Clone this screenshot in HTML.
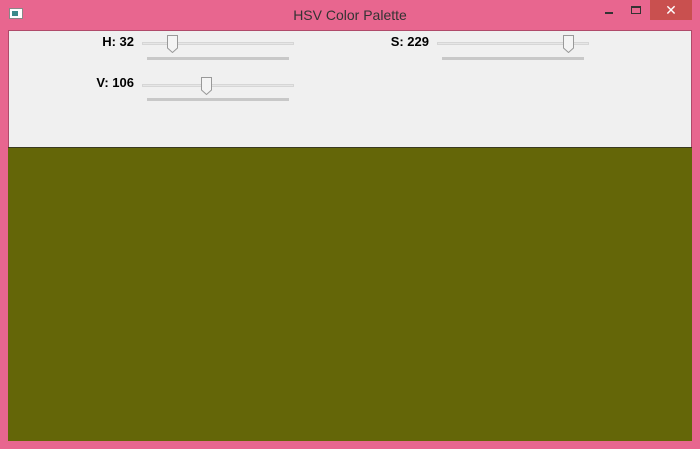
<!DOCTYPE html>
<html><head><style>
body{margin:0;width:700px;height:449px;background:#e8668f;position:relative;overflow:hidden;font-family:"Liberation Sans",sans-serif}
.a{position:absolute}
.title{left:0;width:700px;top:7px;text-align:center;font-size:14px;color:#333}
.client{left:8px;top:30px;width:684px;height:411px;background:#f0f0f0;border:1px solid #b04a6a;box-sizing:border-box}
.olive{left:8px;top:147px;width:684px;height:294px;background:#646608;border-top:1px solid #3a3a20;box-sizing:border-box}
.lbl{font-size:13px;font-weight:bold;color:#000;text-align:right;width:60px}
.track{height:3px;background:#e6e6e6;border:1px solid #d6d6d6;box-sizing:border-box}
.bar{height:3px;background:#c8c8c8}
.thumb{width:11px;height:18px}
</style></head><body>
<div class="a title">HSV Color Palette</div>
<div class="a" style="left:9px;top:8px;width:14px;height:11px;background:#fff;border:1px solid #888;box-sizing:border-box"><div style="margin:2px;width:6px;height:5px;background:#3a8a8a"></div></div>
<div class="a" style="left:605px;top:12px;width:8px;height:2px;background:#333"></div>
<div class="a" style="left:631px;top:6px;width:10px;height:8px;border:1px solid #333;border-top-width:2px;box-sizing:border-box"></div>
<div class="a" style="left:650px;top:0;width:42px;height:20px;background:#c9504f;color:#fff;text-align:center;font-size:14px;line-height:20px">✕</div>
<div class="a client"></div>
<div class="a olive"></div>

<div class="a lbl" style="left:74px;top:34px">H: 32</div>
<div class="a track" style="left:142px;top:42px;width:152px"></div>
<div class="a bar" style="left:147px;top:57px;width:142px"></div>
<svg class="a thumb" style="left:167px;top:35px" viewBox="0 0 11 18"><path d="M0.5 0.5H10.5V13L5.5 17.5L0.5 13Z" fill="#f4f4f4" stroke="#999"/></svg>

<div class="a lbl" style="left:74px;top:75px">V: 106</div>
<div class="a track" style="left:142px;top:84px;width:152px"></div>
<div class="a bar" style="left:147px;top:98px;width:142px"></div>
<svg class="a thumb" style="left:201px;top:77px" viewBox="0 0 11 18"><path d="M0.5 0.5H10.5V13L5.5 17.5L0.5 13Z" fill="#f4f4f4" stroke="#999"/></svg>

<div class="a lbl" style="left:369px;top:34px">S: 229</div>
<div class="a track" style="left:437px;top:42px;width:152px"></div>
<div class="a bar" style="left:442px;top:57px;width:142px"></div>
<svg class="a thumb" style="left:563px;top:35px" viewBox="0 0 11 18"><path d="M0.5 0.5H10.5V13L5.5 17.5L0.5 13Z" fill="#f4f4f4" stroke="#999"/></svg>
</body></html>
